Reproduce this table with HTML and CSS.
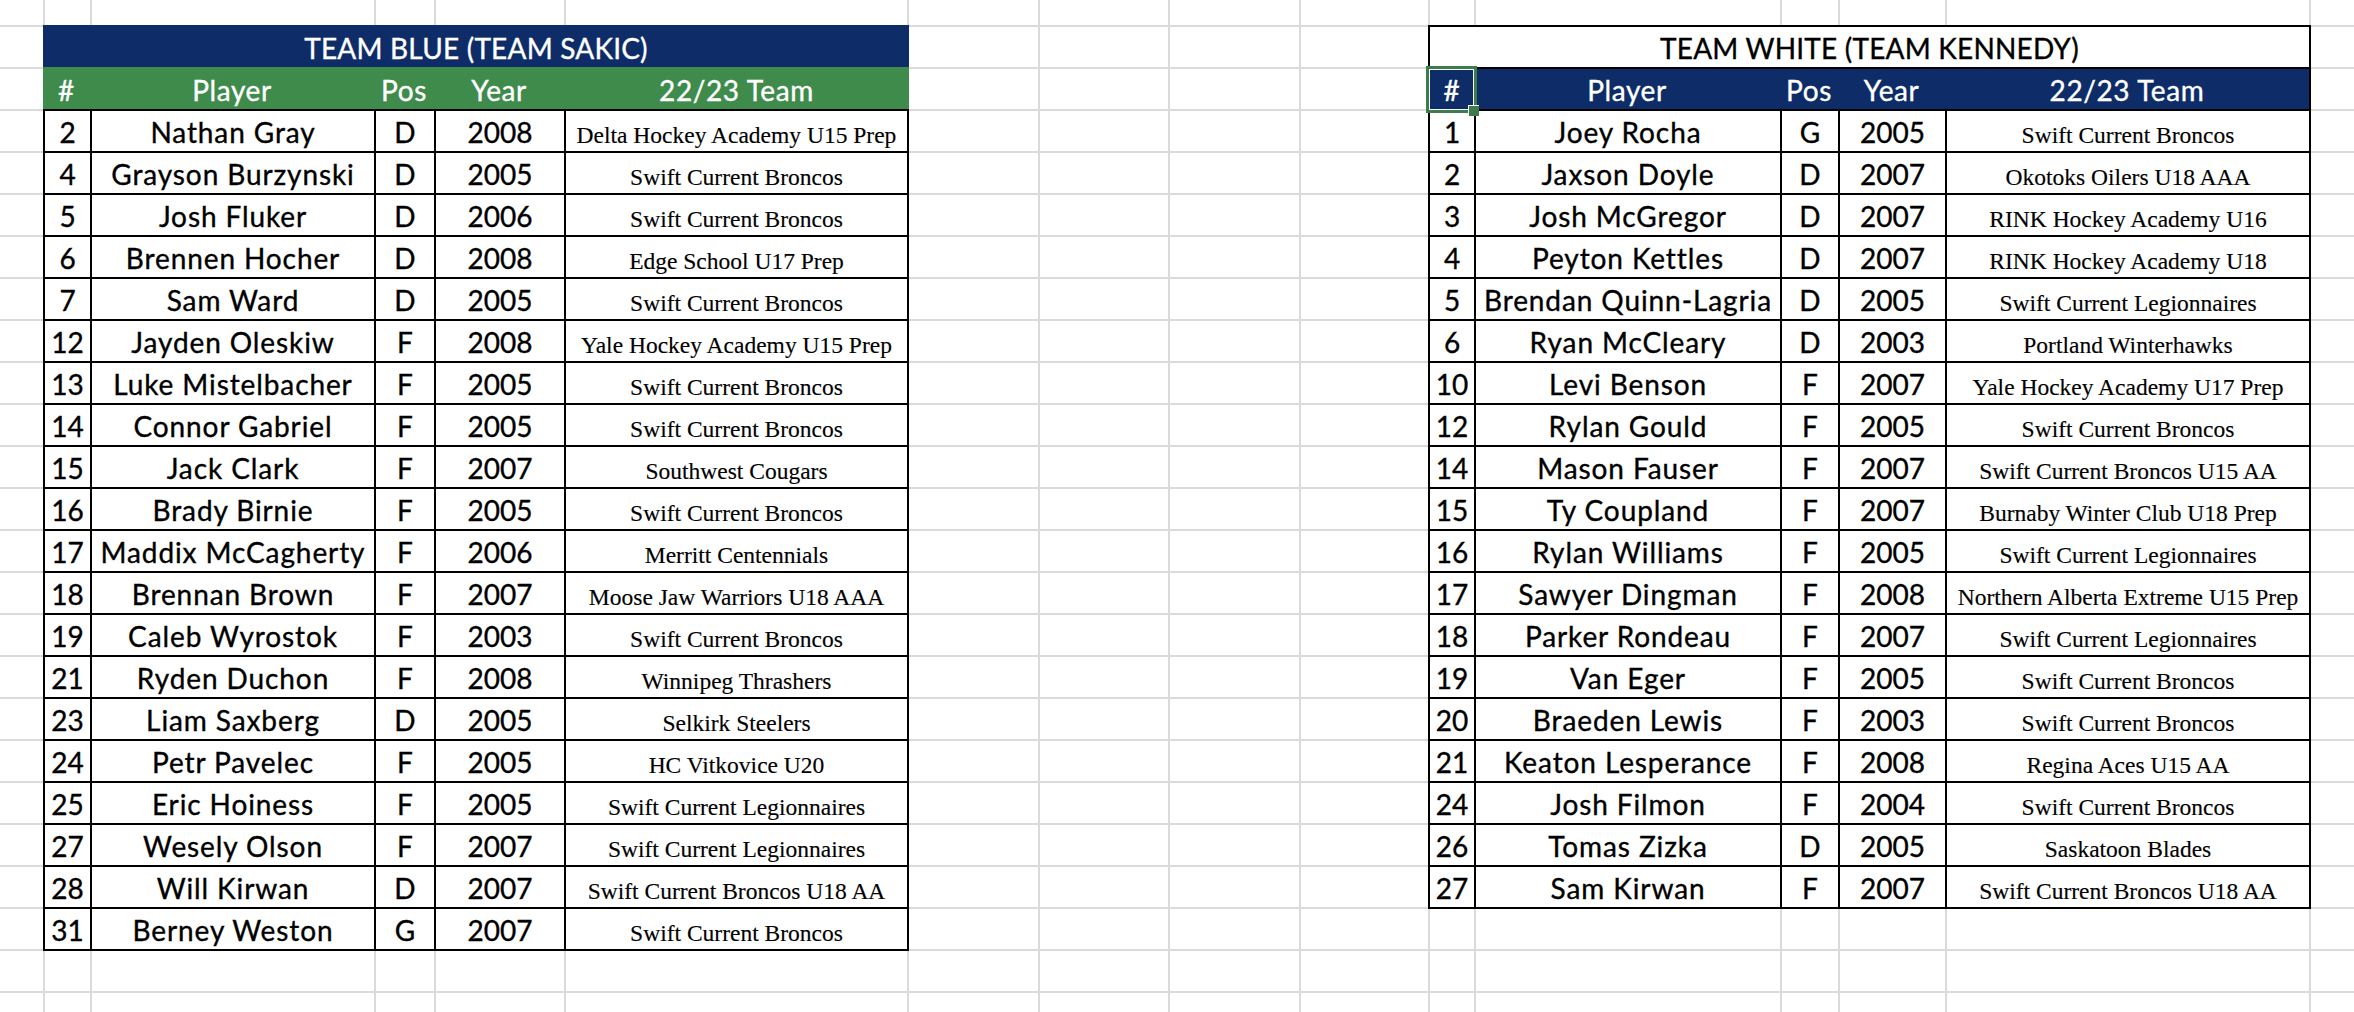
FILE: index.html
```html
<!DOCTYPE html>
<html lang="en">
<head>
<meta charset="utf-8">
<title>Rosters</title>
<link rel="stylesheet" href="styles.css">
</head>
<body>
<div class="sheet">
  <div class="roster blue" role="table">
    <div class="title">TEAM BLUE (TEAM SAKIC)</div>
    <div class="row head-row"><div class="head">#</div><div class="head">Player</div><div class="head">Pos</div><div class="head">Year</div><div class="head">22/23 Team</div></div>
    <div class="row"><div class="cell">2</div><div class="cell">Nathan Gray</div><div class="cell">D</div><div class="cell">2008</div><div class="cell team">Delta Hockey Academy U15 Prep</div></div>
    <div class="row"><div class="cell">4</div><div class="cell">Grayson Burzynski</div><div class="cell">D</div><div class="cell">2005</div><div class="cell team">Swift Current Broncos</div></div>
    <div class="row"><div class="cell">5</div><div class="cell">Josh Fluker</div><div class="cell">D</div><div class="cell">2006</div><div class="cell team">Swift Current Broncos</div></div>
    <div class="row"><div class="cell">6</div><div class="cell">Brennen Hocher</div><div class="cell">D</div><div class="cell">2008</div><div class="cell team">Edge School U17 Prep</div></div>
    <div class="row"><div class="cell">7</div><div class="cell">Sam Ward</div><div class="cell">D</div><div class="cell">2005</div><div class="cell team">Swift Current Broncos</div></div>
    <div class="row"><div class="cell">12</div><div class="cell">Jayden Oleskiw</div><div class="cell">F</div><div class="cell">2008</div><div class="cell team">Yale Hockey Academy U15 Prep</div></div>
    <div class="row"><div class="cell">13</div><div class="cell">Luke Mistelbacher</div><div class="cell">F</div><div class="cell">2005</div><div class="cell team">Swift Current Broncos</div></div>
    <div class="row"><div class="cell">14</div><div class="cell">Connor Gabriel</div><div class="cell">F</div><div class="cell">2005</div><div class="cell team">Swift Current Broncos</div></div>
    <div class="row"><div class="cell">15</div><div class="cell">Jack Clark</div><div class="cell">F</div><div class="cell">2007</div><div class="cell team">Southwest Cougars</div></div>
    <div class="row"><div class="cell">16</div><div class="cell">Brady Birnie</div><div class="cell">F</div><div class="cell">2005</div><div class="cell team">Swift Current Broncos</div></div>
    <div class="row"><div class="cell">17</div><div class="cell">Maddix McCagherty</div><div class="cell">F</div><div class="cell">2006</div><div class="cell team">Merritt Centennials</div></div>
    <div class="row"><div class="cell">18</div><div class="cell">Brennan Brown</div><div class="cell">F</div><div class="cell">2007</div><div class="cell team">Moose Jaw Warriors U18 AAA</div></div>
    <div class="row"><div class="cell">19</div><div class="cell">Caleb Wyrostok</div><div class="cell">F</div><div class="cell">2003</div><div class="cell team">Swift Current Broncos</div></div>
    <div class="row"><div class="cell">21</div><div class="cell">Ryden Duchon</div><div class="cell">F</div><div class="cell">2008</div><div class="cell team">Winnipeg Thrashers</div></div>
    <div class="row"><div class="cell">23</div><div class="cell">Liam Saxberg</div><div class="cell">D</div><div class="cell">2005</div><div class="cell team">Selkirk Steelers</div></div>
    <div class="row"><div class="cell">24</div><div class="cell">Petr Pavelec</div><div class="cell">F</div><div class="cell">2005</div><div class="cell team">HC Vitkovice U20</div></div>
    <div class="row"><div class="cell">25</div><div class="cell">Eric Hoiness</div><div class="cell">F</div><div class="cell">2005</div><div class="cell team">Swift Current Legionnaires</div></div>
    <div class="row"><div class="cell">27</div><div class="cell">Wesely Olson</div><div class="cell">F</div><div class="cell">2007</div><div class="cell team">Swift Current Legionnaires</div></div>
    <div class="row"><div class="cell">28</div><div class="cell">Will Kirwan</div><div class="cell">D</div><div class="cell">2007</div><div class="cell team">Swift Current Broncos U18 AA</div></div>
    <div class="row"><div class="cell">31</div><div class="cell">Berney Weston</div><div class="cell">G</div><div class="cell">2007</div><div class="cell team">Swift Current Broncos</div></div>
  </div>

  <div class="roster white" role="table">
    <div class="title">TEAM WHITE (TEAM KENNEDY)</div>
    <div class="row head-row"><div class="head first sel">#</div><div class="head">Player</div><div class="head">Pos</div><div class="head">Year</div><div class="head last">22/23 Team</div></div>
    <div class="row"><div class="cell">1</div><div class="cell">Joey Rocha</div><div class="cell">G</div><div class="cell">2005</div><div class="cell team">Swift Current Broncos</div></div>
    <div class="row"><div class="cell">2</div><div class="cell">Jaxson Doyle</div><div class="cell">D</div><div class="cell">2007</div><div class="cell team">Okotoks Oilers U18 AAA</div></div>
    <div class="row"><div class="cell">3</div><div class="cell">Josh McGregor</div><div class="cell">D</div><div class="cell">2007</div><div class="cell team">RINK Hockey Academy U16</div></div>
    <div class="row"><div class="cell">4</div><div class="cell">Peyton Kettles</div><div class="cell">D</div><div class="cell">2007</div><div class="cell team">RINK Hockey Academy U18</div></div>
    <div class="row"><div class="cell">5</div><div class="cell">Brendan Quinn-Lagria</div><div class="cell">D</div><div class="cell">2005</div><div class="cell team">Swift Current Legionnaires</div></div>
    <div class="row"><div class="cell">6</div><div class="cell">Ryan McCleary</div><div class="cell">D</div><div class="cell">2003</div><div class="cell team">Portland Winterhawks</div></div>
    <div class="row"><div class="cell">10</div><div class="cell">Levi Benson</div><div class="cell">F</div><div class="cell">2007</div><div class="cell team">Yale Hockey Academy U17 Prep</div></div>
    <div class="row"><div class="cell">12</div><div class="cell">Rylan Gould</div><div class="cell">F</div><div class="cell">2005</div><div class="cell team">Swift Current Broncos</div></div>
    <div class="row"><div class="cell">14</div><div class="cell">Mason Fauser</div><div class="cell">F</div><div class="cell">2007</div><div class="cell team">Swift Current Broncos U15 AA</div></div>
    <div class="row"><div class="cell">15</div><div class="cell">Ty Coupland</div><div class="cell">F</div><div class="cell">2007</div><div class="cell team">Burnaby Winter Club U18 Prep</div></div>
    <div class="row"><div class="cell">16</div><div class="cell">Rylan Williams</div><div class="cell">F</div><div class="cell">2005</div><div class="cell team">Swift Current Legionnaires</div></div>
    <div class="row"><div class="cell">17</div><div class="cell">Sawyer Dingman</div><div class="cell">F</div><div class="cell">2008</div><div class="cell team">Northern Alberta Extreme U15 Prep</div></div>
    <div class="row"><div class="cell">18</div><div class="cell">Parker Rondeau</div><div class="cell">F</div><div class="cell">2007</div><div class="cell team">Swift Current Legionnaires</div></div>
    <div class="row"><div class="cell">19</div><div class="cell">Van Eger</div><div class="cell">F</div><div class="cell">2005</div><div class="cell team">Swift Current Broncos</div></div>
    <div class="row"><div class="cell">20</div><div class="cell">Braeden Lewis</div><div class="cell">F</div><div class="cell">2003</div><div class="cell team">Swift Current Broncos</div></div>
    <div class="row"><div class="cell">21</div><div class="cell">Keaton Lesperance</div><div class="cell">F</div><div class="cell">2008</div><div class="cell team">Regina Aces U15 AA</div></div>
    <div class="row"><div class="cell">24</div><div class="cell">Josh Filmon</div><div class="cell">F</div><div class="cell">2004</div><div class="cell team">Swift Current Broncos</div></div>
    <div class="row"><div class="cell">26</div><div class="cell">Tomas Zizka</div><div class="cell">D</div><div class="cell">2005</div><div class="cell team">Saskatoon Blades</div></div>
    <div class="row"><div class="cell">27</div><div class="cell">Sam Kirwan</div><div class="cell">F</div><div class="cell">2007</div><div class="cell team">Swift Current Broncos U18 AA</div></div>
  </div>
</div>
</body>
</html>
```

FILE: styles.css
```css
* {
  box-sizing: border-box;
}

html,
body {
  margin: 0;
  padding: 0;
  background: #ffffff;
}

body {
  width: 2354px;
  height: 1012px;
  overflow: hidden;
  font-family: Lato, "Liberation Sans", sans-serif;
  color: #000000;
}

/* Spreadsheet canvas: columns sized like the worksheet, gridlines as background */
.sheet {
  --grid: #dadada;
  display: grid;
  grid-template-columns: 44px 47px 284px 60px 130px 343px 131px 130px 131px 129px 46px 306px 58px 107px 364px 1fr;
  grid-template-rows: 26px auto;
  height: 1012px;
  background-color: #ffffff;
  background-image:
    linear-gradient(to bottom, var(--grid) 0 2px, transparent 2px),
    linear-gradient(var(--grid), var(--grid)),
    linear-gradient(var(--grid), var(--grid)),
    linear-gradient(var(--grid), var(--grid)),
    linear-gradient(var(--grid), var(--grid)),
    linear-gradient(var(--grid), var(--grid)),
    linear-gradient(var(--grid), var(--grid)),
    linear-gradient(var(--grid), var(--grid)),
    linear-gradient(var(--grid), var(--grid)),
    linear-gradient(var(--grid), var(--grid)),
    linear-gradient(var(--grid), var(--grid)),
    linear-gradient(var(--grid), var(--grid)),
    linear-gradient(var(--grid), var(--grid)),
    linear-gradient(var(--grid), var(--grid)),
    linear-gradient(var(--grid), var(--grid)),
    linear-gradient(var(--grid), var(--grid));
  background-size:
    100% 42px,
    2px 100%, 2px 100%, 2px 100%, 2px 100%, 2px 100%,
    2px 100%, 2px 100%, 2px 100%, 2px 100%, 2px 100%,
    2px 100%, 2px 100%, 2px 100%, 2px 100%, 2px 100%;
  background-position:
    0 25px,
    43px 0, 90px 0, 374px 0, 434px 0, 564px 0,
    907px 0, 1038px 0, 1168px 0, 1299px 0, 1428px 0,
    1474px 0, 1780px 0, 1838px 0, 1945px 0, 2309px 0;
  background-repeat: repeat-y;
}

/* Roster tables */
.roster {
  grid-row: 2;
  align-self: start;
  display: grid;
  grid-auto-rows: 42px;
  margin: -1px -1px 0;
  border-bottom: 2px solid #000000;
  font-size: 28px;
  -webkit-text-stroke: 0.35px currentColor;
}

.roster.blue {
  grid-column: 2 / 7;
  grid-template-columns: 47px 284px 60px 130px 345px;
}

.roster.white {
  grid-column: 11 / 16;
  grid-template-columns: 46px 306px 58px 107px 366px;
}

.row {
  display: contents;
}

.title,
.head,
.cell {
  display: flex;
  align-items: flex-end;
  justify-content: center;
  line-height: 34px;
  padding-bottom: 2px;
  white-space: nowrap;
}

.title {
  grid-column: 1 / -1;
  letter-spacing: 0.2px;
}

.blue .title {
  background: #0e2d68;
  color: #ffffff;
}

.white .title {
  background: #ffffff;
  border: 2px solid #000000;
  border-bottom: 0;
}

.head {
  color: #ffffff;
  letter-spacing: 0.6px;
}

.blue .head {
  background: #3e8b4c;
}

.white .head {
  background: #0e2d68;
  border-top: 2px solid #000000;
}

.white .head.first {
  border-left: 2px solid #000000;
}

.white .head.last {
  border-right: 2px solid #000000;
}

.cell {
  background: #ffffff;
  border-left: 2px solid #000000;
  border-top: 2px solid #000000;
}

/* Player-name column */
.row > .cell:nth-child(2) {
  letter-spacing: 0.9px;
}

.cell.team {
  border-right: 2px solid #000000;
  font-family: "Liberation Serif", "Times New Roman", serif;
  font-size: 23.5px;
  line-height: 26px;
  padding-bottom: 3.5px;
  -webkit-text-stroke: 0.15px currentColor;
}

/* Active-cell selection on the White roster header */
.sel {
  position: relative;
}

.sel::before {
  content: "";
  position: absolute;
  top: -3px;
  left: -4px;
  right: -3px;
  bottom: -4px;
  border: 3px solid #3e7b4d;
  box-shadow: inset 0 0 0 1px #ffffff;
}

.sel::after {
  content: "";
  position: absolute;
  right: -5px;
  bottom: -7px;
  width: 10px;
  height: 10px;
  background: #3e7b4d;
  border-left: 1px solid #ffffff;
  border-top: 1px solid #ffffff;
}
```
